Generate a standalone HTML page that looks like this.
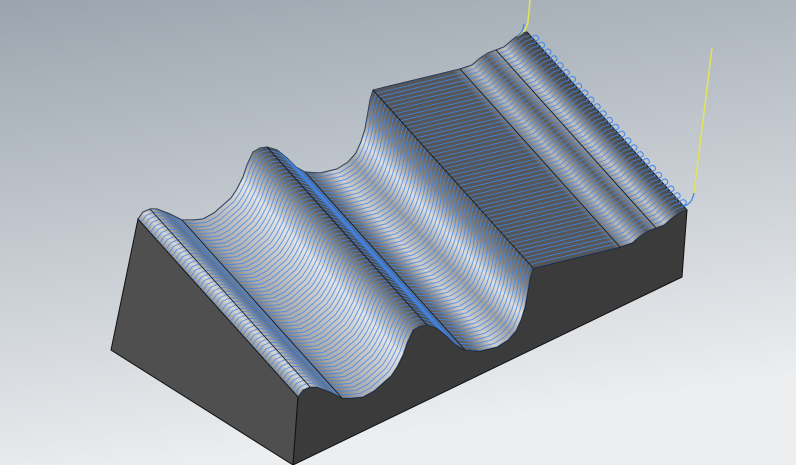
<!DOCTYPE html>
<html><head><meta charset="utf-8"><style>
html,body{margin:0;padding:0;width:796px;height:465px;overflow:hidden;background:#c4cad0}
svg{display:block}
</style></head><body>
<svg id="s" width="796" height="465" viewBox="0 0 796 465" xmlns="http://www.w3.org/2000/svg">
<defs>
<linearGradient id="bg" x1="0" y1="0" x2="0.25" y2="1">
<stop offset="0" stop-color="#9ba4ad"/><stop offset="0.5" stop-color="#c3c9cf"/><stop offset="1" stop-color="#eceef0"/>
</linearGradient>
<linearGradient id="topg" gradientUnits="userSpaceOnUse" x1="298" y1="397" x2="605" y2="115">
<stop offset="0" stop-color="#8a8a8a"/><stop offset="0.03" stop-color="#d8d8d8"/><stop offset="0.065" stop-color="#6a6a6a"/>
<stop offset="0.11" stop-color="#a8a8a8"/><stop offset="0.18" stop-color="#c4c4c4"/><stop offset="0.25" stop-color="#e2e2e2"/>
<stop offset="0.3" stop-color="#9a9a9a"/><stop offset="0.35" stop-color="#4a4a4a"/><stop offset="0.385" stop-color="#666"/>
<stop offset="0.43" stop-color="#cfcfcf"/><stop offset="0.48" stop-color="#a0a0a0"/><stop offset="0.53" stop-color="#dedede"/>
<stop offset="0.58" stop-color="#858585"/><stop offset="0.63" stop-color="#555"/><stop offset="0.8" stop-color="#575757"/>
<stop offset="0.845" stop-color="#b8b8b8"/><stop offset="0.885" stop-color="#5c5c5c"/><stop offset="0.93" stop-color="#c4c4c4"/>
<stop offset="0.97" stop-color="#555"/><stop offset="1" stop-color="#404040"/>
</linearGradient>
<clipPath id="tc"><path id="tp" d=""/></clipPath>
</defs>
<rect width="796" height="465" fill="url(#bg)"/>
<polygon points="138,219 298,397 293,465 111,350" fill="#4f4f4f" stroke="#111" stroke-width="1"/>
<path id="front" fill="#3b3b3b" stroke="#111" stroke-width="1" d=""/>
<path id="topf" fill="url(#topg)" stroke="#1a1a1a" stroke-width="1" d=""/>
<g id="lines" clip-path="url(#tc)" fill="none"></g>
<g id="loops" fill="none" stroke="#3f86ec" stroke-width="1"></g>
<path d="M530,0 L528,22 Q526,32 517,36" fill="none" stroke="#e4e45a" stroke-width="1.5"/>
<path d="M524,24 Q523,33 517,36" fill="none" stroke="#3f86ec" stroke-width="1.2"/>
<path d="M712,48 L694,193" fill="none" stroke="#e4e45a" stroke-width="1.5"/>
<path d="M694,193 Q692,204 684,206" fill="none" stroke="#3f86ec" stroke-width="1.2"/>
</svg>
<script>
(function(){
var P=[[298,397],[303,390],[310,387],[317,387],[330,392],[342,398],[352,398],[363,397],[374,391],[383,383],[391,376],[397,367],[403,355],[407,343],[413,330],[420,326],[427,325],[437,328],[447,336],[456,345],[465,350],[480,351],[497,347],[508,340],[516,331],[521,320],[525,307],[528,290],[530,278],[533,268],[620,247],[632,243],[640,236],[648,231],[656,228],[664,225],[672,218],[680,212],[687,210]];
var E=[-160,-178];
function pts(dx,dy){return P.map(function(p){return (p[0]+dx).toFixed(1)+","+(p[1]+dy).toFixed(1)});}
var fwd=pts(0,0),bk=pts(E[0],E[1]);
var sd="M"+fwd.join(" L")+" L"+bk.slice().reverse().join(" L")+" Z";
document.getElementById("topf").setAttribute("d",sd);
document.getElementById("tp").setAttribute("d",sd);
document.getElementById("front").setAttribute("d","M"+fwd.join(" L")+" L682,277 L293,465 Z");
var g=document.getElementById("lines"),L=document.getElementById("loops"),ns="http://www.w3.org/2000/svg";
var N=52;
for(var i=0;i<=N;i++){var t=i/N,dx=E[0]*t,dy=E[1]*t;
 var pl=document.createElementNS(ns,"polyline");pl.setAttribute("points",pts(dx,dy).join(" "));
 pl.setAttribute("stroke","#3f86ec");pl.setAttribute("stroke-width","0.9");pl.setAttribute("opacity","0.85");g.appendChild(pl);
 if(i%2==0&&i>0&&i<N){var c=document.createElementNS(ns,"path");var x=687+dx,y=210+dy;
  c.setAttribute("d","M"+(x-2).toFixed(1)+","+y.toFixed(1)+" q4,-6 7,-2 q2,4 -4,4");L.appendChild(c);}
}
[[620,247],[533,268],[465,350],[427,325],[342,398],[656,228],[310,387]].forEach(function(p){
 var l=document.createElementNS(ns,"line");l.setAttribute("x1",p[0]);l.setAttribute("y1",p[1]);
 l.setAttribute("x2",p[0]+E[0]);l.setAttribute("y2",p[1]+E[1]);l.setAttribute("stroke","#111");l.setAttribute("stroke-width","0.8");g.appendChild(l);});
})();
</script>
</body></html>
